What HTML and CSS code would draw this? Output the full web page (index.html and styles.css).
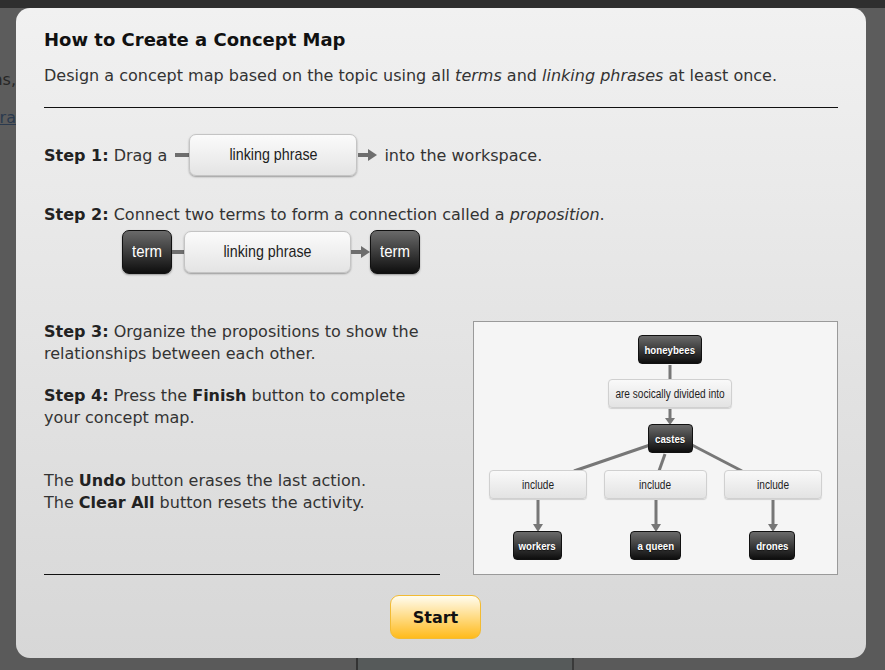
FILE: index.html
```html
<!DOCTYPE html>
<html lang="en">
<head>
<meta charset="utf-8">
<title>How to Create a Concept Map</title>
<link rel="stylesheet" href="styles.css">
</head>
<body>
<div class="page">
  <div class="topbar"></div>
  <div class="bg-panel">
    <p class="bg-text">Drag terms,</p>
    <p class="bg-link"><a href="#">Parts of a paragra</a></p>
  </div>
  <div class="bg-bottom">
    <div class="bg-col"></div>
  </div>
</div>

<div class="modal" role="dialog" aria-labelledby="dlg-title">
  <h1 id="dlg-title" class="title">How to Create a Concept Map</h1>
  <p class="intro">Design a concept map based on the topic using all <em>terms</em> and <em>linking phrases</em> at least once.</p>
  <hr class="rule">

  <div class="step step1">
    <span><b>Step 1:</b> Drag a</span>
    <span class="link-chip">
      <span class="stub"></span>
      <span class="phrase"><span class="narrow">linking phrase</span></span>
      <span class="arrow"><span class="shaft"></span><span class="head"></span></span>
    </span>
    <span>into the workspace.</span>
  </div>

  <div class="step step2">
    <p class="step-text"><b>Step 2:</b> Connect two terms to form a connection called a <em>proposition</em>.</p>
    <div class="prop-row">
      <span class="term"><span class="narrow">term</span></span>
      <span class="stub wide"></span>
      <span class="phrase"><span class="narrow">linking phrase</span></span>
      <span class="arrow"><span class="shaft"></span><span class="head"></span></span>
      <span class="term"><span class="narrow">term</span></span>
    </div>
  </div>

  <div class="lower">
    <div class="lower-text">
      <p class="para"><b>Step 3:</b> Organize the propositions to show the relationships between each other.</p>
      <p class="para"><b>Step 4:</b> Press the <b>Finish</b> button to complete your concept map.</p>
      <p class="para buttons-note">The <b>Undo</b> button erases the last action.<br>The <b>Clear All</b> button resets the activity.</p>
      <hr class="rule short">
    </div>
    <div class="example">
      <svg class="links" width="364" height="253" viewBox="0 0 364 253" aria-hidden="true">
        <g stroke="#777" stroke-width="3" fill="none">
          <line x1="196" y1="43" x2="196" y2="58"/>
          <line x1="196" y1="87" x2="196" y2="97"/>
          <line x1="176" y1="123" x2="100" y2="149"/>
          <line x1="191" y1="132" x2="185" y2="149"/>
          <line x1="218" y1="123" x2="268" y2="149"/>
          <line x1="64" y1="178" x2="64" y2="203"/>
          <line x1="182" y1="178" x2="182" y2="203"/>
          <line x1="299" y1="178" x2="299" y2="203"/>
        </g>
        <g fill="#777">
          <polygon points="191,96 201,96 196,103"/>
          <polygon points="59,202 69,202 64,210"/>
          <polygon points="177,202 187,202 182,210"/>
          <polygon points="294,202 304,202 299,210"/>
        </g>
      </svg>
      <span class="node term-node n-honey"><span class="narrow">honeybees</span></span>
      <span class="node phrase-node n-divided"><span class="narrow">are socically divided into</span></span>
      <span class="node term-node n-castes"><span class="narrow">castes</span></span>
      <span class="node phrase-node n-inc1"><span class="narrow">include</span></span>
      <span class="node phrase-node n-inc2"><span class="narrow">include</span></span>
      <span class="node phrase-node n-inc3"><span class="narrow">include</span></span>
      <span class="node term-node n-workers"><span class="narrow">workers</span></span>
      <span class="node term-node n-queen"><span class="narrow">a queen</span></span>
      <span class="node term-node n-drones"><span class="narrow">drones</span></span>
    </div>
  </div>

  <div class="actions">
    <button class="start" type="button">Start</button>
  </div>
</div>
</body>
</html>
```
FILE: styles.css
```css
html, body {
  margin: 0;
  padding: 0;
}

body {
  width: 885px;
  height: 670px;
  overflow: hidden;
  background: #5a5a5a;
  font-family: "DejaVu Sans", Verdana, sans-serif;
  position: relative;
}

.page {
  height: 670px;
  display: flex;
  flex-direction: column;
}

.topbar {
  height: 8px;
  background: #2f2f2f;
  flex: none;
}

.bg-panel {
  height: 132px;
  background: #5c5c5c;
  position: relative;
  overflow: hidden;
}

.bg-text,
.bg-link {
  margin: 0;
  position: absolute;
  right: 869px;
  font-size: 16px;
  white-space: nowrap;
  color: #262626;
}

.bg-text { top: 62px; }
.bg-link { top: 100px; }

.bg-link a {
  color: #2b3a4e;
  text-decoration: underline;
}

.bg-bottom {
  margin-top: auto;
  height: 12px;
  position: relative;
}

.bg-col {
  position: absolute;
  left: 356px;
  width: 214px;
  height: 12px;
  background: #565a5a;
  border-left: 2px solid #333;
  border-right: 2px solid #3a3a3a;
}

.modal {
  position: absolute;
  left: 16px;
  top: 8px;
  width: 850px;
  height: 650px;
  box-sizing: border-box;
  padding: 21px 28px 0 28px;
  border-radius: 14px;
  background: linear-gradient(#f1f1f1, #d7d7d7);
  color: #222;
  display: flex;
  flex-direction: column;
}

.title {
  margin: 0;
  font-size: 18px;
  font-weight: bold;
  line-height: 22px;
  color: #111;
}

.intro {
  margin: 14px 0 0 0;
  font-size: 16px;
  line-height: 22px;
  color: #333;
}

.rule {
  margin: 20px 0 0 0;
  border: 0;
  border-top: 1px solid #111;
  height: 0;
}

.step {
  font-size: 16px;
  color: #333;
}

.step b { color: #222; }

.narrow {
  display: inline-block;
  transform: scaleX(0.88);
  white-space: nowrap;
}

.step1 {
  margin-top: 26px;
  display: flex;
  align-items: center;
  gap: 8px;
  height: 42px;
}

.step1 > span:last-child { margin-left: -1px; }

.link-chip {
  display: flex;
  align-items: center;
}

.stub {
  width: 14px;
  height: 4px;
  background: #6e6e6e;
  flex: none;
}

.stub.wide { width: 12px; }

.phrase {
  width: 168px;
  height: 42px;
  box-sizing: border-box;
  display: flex;
  align-items: center;
  justify-content: center;
  border-radius: 7px;
  border: 1px solid #c4c4c4;
  background: linear-gradient(#fbfbfb, #e4e4e4);
  box-shadow: 0 1px 2px rgba(0,0,0,0.35);
  font-family: "Liberation Sans", Arial, sans-serif;
  font-size: 17px;
  color: #1e1e1e;
  flex: none;
}

.phrase .narrow { transform: scaleX(0.84); }

.arrow {
  display: flex;
  align-items: center;
  flex: none;
}

.shaft {
  width: 10px;
  height: 4px;
  background: #6e6e6e;
}

.head {
  width: 0;
  height: 0;
  border-top: 6px solid transparent;
  border-bottom: 6px solid transparent;
  border-left: 9px solid #6e6e6e;
}

.step1 .arrow { margin-left: 1px; }

.step2 {
  margin-top: 28px;
}

.step-text {
  margin: 0;
  line-height: 22px;
}

.prop-row {
  margin: 4px 0 0 78px;
  display: flex;
  align-items: center;
  height: 44px;
}

.prop-row .phrase {
  width: 167px;
  height: 42px;
}

.term {
  width: 50px;
  height: 44px;
  box-sizing: border-box;
  display: flex;
  align-items: center;
  justify-content: center;
  border-radius: 7px;
  border: 1px solid #111;
  background: linear-gradient(#6a6a6a, #0e0e0e);
  box-shadow: 0 1px 2px rgba(0,0,0,0.35);
  color: #fff;
  font-family: "Liberation Sans", Arial, sans-serif;
  font-size: 17px;
  flex: none;
}

.lower {
  margin-top: 47px;
  display: flex;
  justify-content: space-between;
  align-items: stretch;
  height: 254px;
}

.lower-text {
  width: 396px;
  display: flex;
  flex-direction: column;
  font-size: 16px;
  color: #333;
}

.lower-text b { color: #222; }

.para {
  margin: 0;
  line-height: 22px;
}

.para + .para { margin-top: 20px; }

.para.buttons-note { margin-top: 41px; }

.rule.short {
  margin-top: auto;
  width: 396px;
}

.example {
  position: relative;
  width: 365px;
  height: 254px;
  box-sizing: border-box;
  border: 1px solid #9a9a9a;
  background: #f5f5f5;
}

.links {
  position: absolute;
  left: 0;
  top: 0;
}

.node {
  position: absolute;
  display: flex;
  align-items: center;
  justify-content: center;
  box-sizing: border-box;
  height: 29px;
  border-radius: 4px;
  font-family: "Liberation Sans", Arial, sans-serif;
  font-size: 11px;
  white-space: nowrap;
}

.term-node {
  background: linear-gradient(#6a6a6a, #0e0e0e);
  border: 1px solid #111;
  color: #fff;
  font-weight: bold;
  text-shadow: 0 1px 1px rgba(0,0,0,0.6);
}

.phrase-node {
  background: linear-gradient(#f9f9f9, #e3e3e3);
  border: 1px solid #d0d0d0;
  color: #1e1e1e;
  font-size: 12px;
  box-shadow: 0 1px 1px rgba(0,0,0,0.15);
}

.phrase-node .narrow { transform: scaleX(0.84); }

.n-honey   { left: 164px; top: 13px; width: 64px; }
.n-divided { left: 134px; top: 57px; width: 124px; }
.n-castes  { left: 174px; top: 102px; width: 45px; }
.n-inc1    { left: 15px;  top: 148px; width: 98px; }
.n-inc2    { left: 130px; top: 148px; width: 103px; }
.n-inc3    { left: 250px; top: 148px; width: 98px; }
.n-workers { left: 39px;  top: 209px; width: 49px; }
.n-queen   { left: 156px; top: 209px; width: 51px; }
.n-drones  { left: 275px; top: 209px; width: 46px; }

.actions {
  margin-top: 20px;
  padding-left: 346px;
}

.start {
  width: 91px;
  height: 44px;
  border-radius: 9px;
  border: 1px solid #f2bb33;
  background: linear-gradient(#fffcef, #ffbb1c);
  font-family: "DejaVu Sans", Verdana, sans-serif;
  font-size: 16px;
  font-weight: bold;
  color: #111;
  cursor: pointer;
}
```
